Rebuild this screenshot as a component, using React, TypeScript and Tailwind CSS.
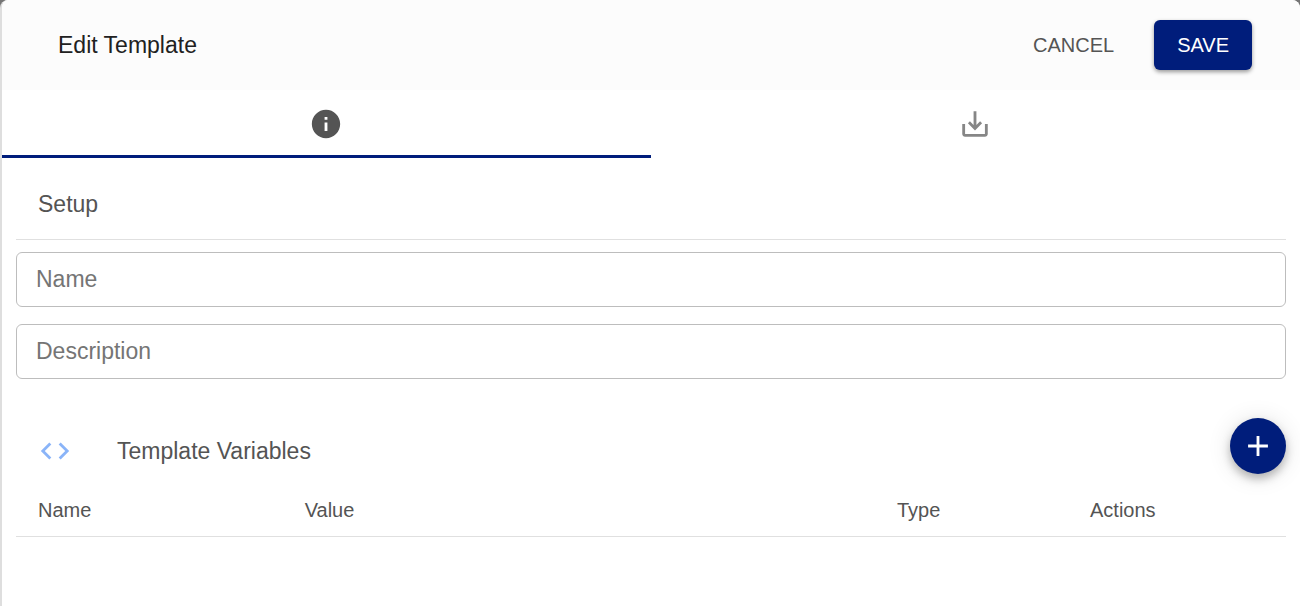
import type { ReactNode } from "react";

function Icon({ d, className = "" }: { d: string; className?: string }) {
  return (
    <svg viewBox="0 0 24 24" fill="currentColor" aria-hidden="true" className={`size-[34px] ${className}`}>
      <path d={d} />
    </svg>
  );
}

const icons = {
  info: "M12 2C6.48 2 2 6.48 2 12s4.48 10 10 10 10-4.48 10-10S17.52 2 12 2zm1 15h-2v-6h2v6zm0-8h-2V7h2v2z",
  saveAlt:
    "M19 12v7H5v-7H3v7c0 1.1.9 2 2 2h14c1.1 0 2-.9 2-2v-7h-2zm-6 .67l2.59-2.58L17 11.5l-5 5-5-5 1.41-1.41L11 12.67V3h2z",
  code: "M9.4 16.6L4.8 12l4.6-4.6L8 6l-6 6 6 6 1.4-1.4zm5.2 0l4.6-4.6-4.6-4.6L16 6l6 6-6 6-1.4-1.4z",
  add: "M19 13h-6v6h-2v-6H5v-2h6V5h2v6h6v2z",
};

function Tab({ label, selected = false, children }: { label: string; selected?: boolean; children: ReactNode }) {
  return (
    <button
      type="button"
      role="tab"
      aria-label={label}
      aria-selected={selected}
      className={`flex h-[68px] flex-1 items-center justify-center border-b-3 pt-0.5 pr-0.5 ${
        selected ? "border-[#001d7b] text-[#545454]" : "border-transparent text-[#868686]"
      }`}
    >
      {children}
    </button>
  );
}

function TextField({ label }: { label: string }) {
  return (
    <input
      type="text"
      aria-label={label}
      placeholder={label}
      className="h-[55px] w-full rounded-md border border-[#bdbdbd] bg-white px-[19px] text-[23px] text-[#212121] placeholder:text-[#757575] placeholder:opacity-100"
    />
  );
}

export default function App() {
  return (
    <div className="min-h-screen bg-[#757575] font-['Liberation_Sans',Arial,sans-serif]">
      <main className="min-h-screen overflow-hidden rounded-t-lg border-l-2 border-[#dedede] bg-white text-[#545454]">
        <header className="flex h-[90px] items-center justify-between bg-[#fcfcfc] pr-12 pl-14">
          <h1 className="text-[23px] text-[#212121]">Edit Template</h1>
          <div className="flex items-center gap-5">
            <button type="button" className="h-[50px] px-5 text-xl text-[#545454]">
              CANCEL
            </button>
            <button
              type="button"
              className="h-[50px] rounded-md bg-[#001d7b] px-[23px] text-xl text-white shadow-[0_2px_4px_rgba(0,0,0,0.4)]"
            >
              SAVE
            </button>
          </div>
        </header>

        <div role="tablist" className="flex">
          <Tab label="Information" selected>
            <Icon d={icons.info} />
          </Tab>
          <Tab label="Download">
            <Icon d={icons.saveAlt} />
          </Tab>
        </div>

        <div className="px-3.5">
          <h2 className="border-b border-[#e0e0e0] px-[22px] pt-7 pb-[17px] text-[23px] leading-9">Setup</h2>

          <form className="flex flex-col gap-[17px] pt-3">
            <TextField label="Name" />
            <TextField label="Description" />
          </form>

          <section className="pt-[39px]">
            <div className="flex h-14 items-center">
              <h2 className="flex flex-1 items-center gap-[45px] pt-2.5 pl-[22px] text-[23px] leading-9">
                <Icon d={icons.code} className="text-[#8ab4f8]" />
                Template Variables
              </h2>
              <button
                type="button"
                aria-label="Add variable"
                className="flex size-14 items-center justify-center rounded-full bg-[#001d7b] text-white shadow-[0_5px_8px_rgba(0,0,0,0.25),0_2px_24px_rgba(0,0,0,0.12)]"
              >
                <Icon d={icons.add} />
              </button>
            </div>

            <table className="w-full table-fixed text-left text-xl">
              <thead>
                <tr className="h-[62px] border-b border-[#e0e0e0]">
                  <th className="w-[21%] pt-2.5 pl-[22px] font-normal">Name</th>
                  <th className="pt-2.5 pl-[22px] font-normal">Value</th>
                  <th className="w-[193px] pt-2.5 pl-[22px] font-normal">Type</th>
                  <th className="w-[218px] pt-2.5 pl-[22px] font-normal">Actions</th>
                </tr>
              </thead>
            </table>
          </section>
        </div>
      </main>
    </div>
  );
}
